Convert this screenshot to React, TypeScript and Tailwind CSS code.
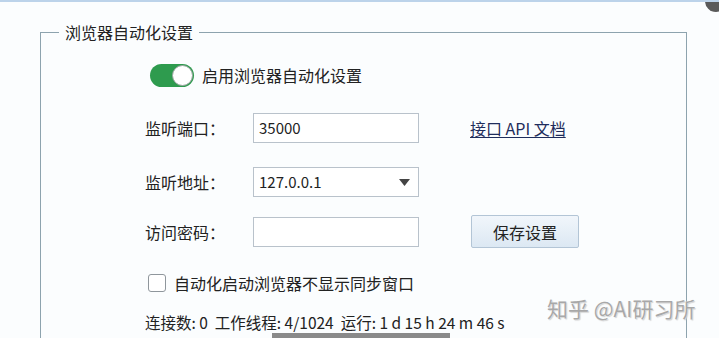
import { useState } from 'react'

const font = { fontFamily: '"Noto Sans CJK SC", "Liberation Sans", sans-serif' }

function Toggle({ on }: { on: boolean }) {
  return (
    <span
      className={`relative inline-flex h-[23px] w-[44px] items-center rounded-full ${on ? 'bg-[#2e9b4e]' : 'bg-[#c9c9c9]'}`}
    >
      <span
        className={`absolute h-[21px] w-[21px] rounded-full border border-[#9aa5a0] bg-white ${on ? 'right-[1px]' : 'left-[1px]'}`}
      />
    </span>
  )
}

function Field({ value, select }: { value?: string; select?: boolean }) {
  return (
    <div className="flex h-[30px] w-[166px] items-center justify-between border border-[#b9c2cb] bg-white pl-[5px] pr-[8px] text-[15px] text-[#222]">
      <span>{value}</span>
      {select && (
        <svg width="11" height="7" viewBox="0 0 11 7">
          <path d="M0 0h11L5.5 7z" fill="#444" />
        </svg>
      )}
    </div>
  )
}

export default function App() {
  const [enabled] = useState(true)

  return (
    <div
      className="relative h-[338px] w-[719px] overflow-hidden border-t-[2px] border-[#bcd3ea] bg-[#fbfdfe] text-[#222]"
      style={font}
    >
      <fieldset className="ml-[40px] mt-[19px] h-[400px] w-[647px] border border-[#8da3ae]">
        <legend className="ml-[18px] px-[6px] text-[16px] leading-[22px]">浏览器自动化设置</legend>

        <div className="ml-[109px] mt-[20px] flex items-center gap-[8px] text-[16px]">
          <Toggle on={enabled} />
          <span>启用浏览器自动化设置</span>
        </div>

        {/* 端口 */}
        <div className="ml-[104px] mt-[26px] flex items-center">
          <span className="w-[108px] text-[16px]">监听端口：</span>
          <Field value="35000" />
          <a className="ml-[51px] text-[16px] text-[#1f2d5c] underline underline-offset-2">接口 API 文档</a>
        </div>

        {/* 地址 */}
        <div className="ml-[104px] mt-[24px] flex items-center">
          <span className="w-[108px] text-[16px]">监听地址：</span>
          <Field value="127.0.0.1" select />
        </div>

        {/* 密码 */}
        <div className="ml-[104px] mt-[18px] flex items-center">
          <span className="w-[108px] text-[16px]">访问密码：</span>
          <Field />
          <button className="ml-[52px] h-[33px] w-[108px] rounded-[2px] border border-[#b3c5d6] bg-gradient-to-b from-[#f1f6fb] to-[#dce8f3] text-[16px] text-[#222]">
            保存设置
          </button>
        </div>

        <div className="ml-[107px] mt-[23px] flex items-center gap-[8px] text-[16px]">
          <span className="h-[18px] w-[18px] rounded-[3px] border border-[#8f969c] bg-white" />
          <span>自动化启动浏览器不显示同步窗口</span>
        </div>

        <div className="ml-[104px] mt-[16px] whitespace-pre text-[15.5px]">
          连接数: 0  工作线程: 4/1024  运行: 1 d 15 h 24 m 46 s
        </div>
      </fieldset>

      {/* 水印 */}
      <div
        className="absolute left-[547px] top-[291px] text-[21px] text-[#a8a8a8]"
        style={{ textShadow: '0 0 1px #fff, 1px 1px 1px #d0d0d0' }}
      >
        知乎 @AI研习所
      </div>

      <div className="absolute bottom-0 left-[272px] h-[5px] w-[178px] bg-[#8a8a8a]" />
      <div className="absolute right-[-8px] top-[-12px] h-[22px] w-[22px] rounded-full bg-[#5a5a5a]" />
    </div>
  )
}
